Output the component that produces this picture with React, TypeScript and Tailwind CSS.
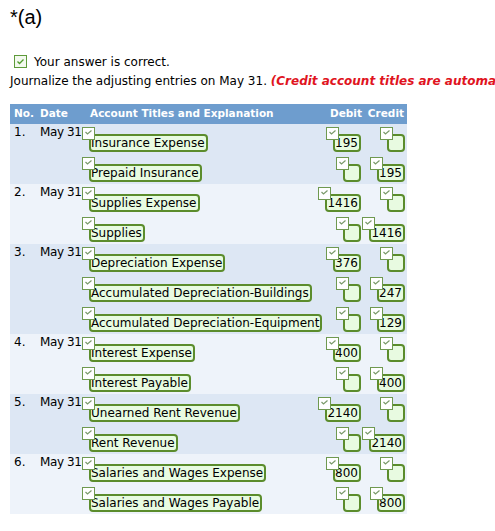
import React from 'react';

type Line = { account: string; debit: string; credit: string };
type Entry = { no: string; lines: Line[] };

const entries: Entry[] = [
  {
    no: '1.',
    lines: [
      { account: 'Insurance Expense', debit: '195', credit: '' },
      { account: 'Prepaid Insurance', debit: '', credit: '195' },
    ],
  },
  {
    no: '2.',
    lines: [
      { account: 'Supplies Expense', debit: '1416', credit: '' },
      { account: 'Supplies', debit: '', credit: '1416' },
    ],
  },
  {
    no: '3.',
    lines: [
      { account: 'Depreciation Expense', debit: '376', credit: '' },
      { account: 'Accumulated Depreciation-Buildings', debit: '', credit: '247' },
      { account: 'Accumulated Depreciation-Equipment', debit: '', credit: '129' },
    ],
  },
  {
    no: '4.',
    lines: [
      { account: 'Interest Expense', debit: '400', credit: '' },
      { account: 'Interest Payable', debit: '', credit: '400' },
    ],
  },
  {
    no: '5.',
    lines: [
      { account: 'Unearned Rent Revenue', debit: '2140', credit: '' },
      { account: 'Rent Revenue', debit: '', credit: '2140' },
    ],
  },
  {
    no: '6.',
    lines: [
      { account: 'Salaries and Wages Expense', debit: '800', credit: '' },
      { account: 'Salaries and Wages Payable', debit: '', credit: '800' },
    ],
  },
];

function SmallCheck() {
  return (
    <svg width="13" height="13" viewBox="0 0 13 13" className="relative z-10 shrink-0">
      <rect x="0.5" y="0.5" width="12" height="12" fill="#ffffff" stroke="#6f9950" />
      <polyline points="3.5,5 5.5,7 9.5,3.5" fill="none" stroke="#7a9a6a" strokeWidth="1.2" />
    </svg>
  );
}

function BigCheck() {
  return (
    <svg width="13" height="13" viewBox="0 0 13 13" className="shrink-0">
      <rect x="0.5" y="0.5" width="12" height="12" fill="#f3f9ef" stroke="#5e9a3a" />
      <polyline points="3.5,6.5 5.5,8.5 9.5,4.5" fill="none" stroke="#4f9a2c" strokeWidth="1.3" />
    </svg>
  );
}

function Field({ value }: { value: string }) {
  return (
    <div className="flex items-start">
      <SmallCheck />
      <div className="-ml-[6px] mt-[7px] h-[18px] min-w-[18px] whitespace-nowrap rounded-[4px] border-2 border-[#5b8c2c] bg-[#e8fbe1] pr-[1px] text-[12px] leading-[14px] text-black">
        {value}
      </div>
    </div>
  );
}

export default function App() {
  return (
    <div
      className="h-[531px] w-[495px] overflow-hidden bg-white text-black"
      style={{ fontFamily: '"DejaVu Sans", Verdana, sans-serif' }}
    >
      <h3
        className="pl-[10px] pt-[5px] text-[20px] leading-[24px]"
        style={{ fontFamily: '"Liberation Sans", Arial, sans-serif' }}
      >
        *(a)
      </h3>

      <div className="mt-[24px] flex h-[17px] items-center gap-[7px] pl-[14px] text-[12px]">
        <BigCheck />
        <span>Your answer is correct.</span>
      </div>

      <p className="mt-[3px] whitespace-nowrap pl-[10px] text-[12px] leading-[16px]">
        Journalize the adjusting entries on May 31.{' '}
        <span className="font-bold italic text-[#e0141e]">
          (Credit account titles are automatically indented when amount is entered. Do not indent manually.)
        </span>
      </p>

      <div className="ml-[10px] mt-[15px] w-[397px]">
        <div className="grid h-[20px] grid-cols-[30px_42px_238px_43px_44px] items-center bg-[#6e9dce] text-[10.5px] font-bold text-white">
          <div className="pl-[4px]">No.</div>
          <div>Date</div>
          <div className="whitespace-nowrap pl-[8px]">Account Titles and Explanation</div>
          <div className="pr-[1px] text-right">Debit</div>
          <div className="pr-[3px] text-right">Credit</div>
        </div>

        {entries.map((entry, i) => (
          <div key={entry.no} className={i % 2 === 0 ? 'bg-[#dde7f4]' : 'bg-[#eef3fa]'}>
            {entry.lines.map((line, j) => (
              <div key={j} className="grid h-[30px] grid-cols-[30px_42px_238px_43px_44px] items-start">
                <div className="pl-[4px] text-[12px] leading-[16px]">{j === 0 ? entry.no : ''}</div>
                <div className="whitespace-nowrap text-[12px] leading-[16px] tracking-[-0.4px]">
                  {j === 0 ? 'May 31' : ''}
                </div>
                <div className="flex pt-[3px]">
                  <Field value={line.account} />
                </div>
                <div className="flex justify-end pr-[2px] pt-[3px]">
                  <Field value={line.debit} />
                </div>
                <div className="flex justify-end pr-[2px] pt-[3px]">
                  <Field value={line.credit} />
                </div>
              </div>
            ))}
          </div>
        ))}
      </div>
    </div>
  );
}
